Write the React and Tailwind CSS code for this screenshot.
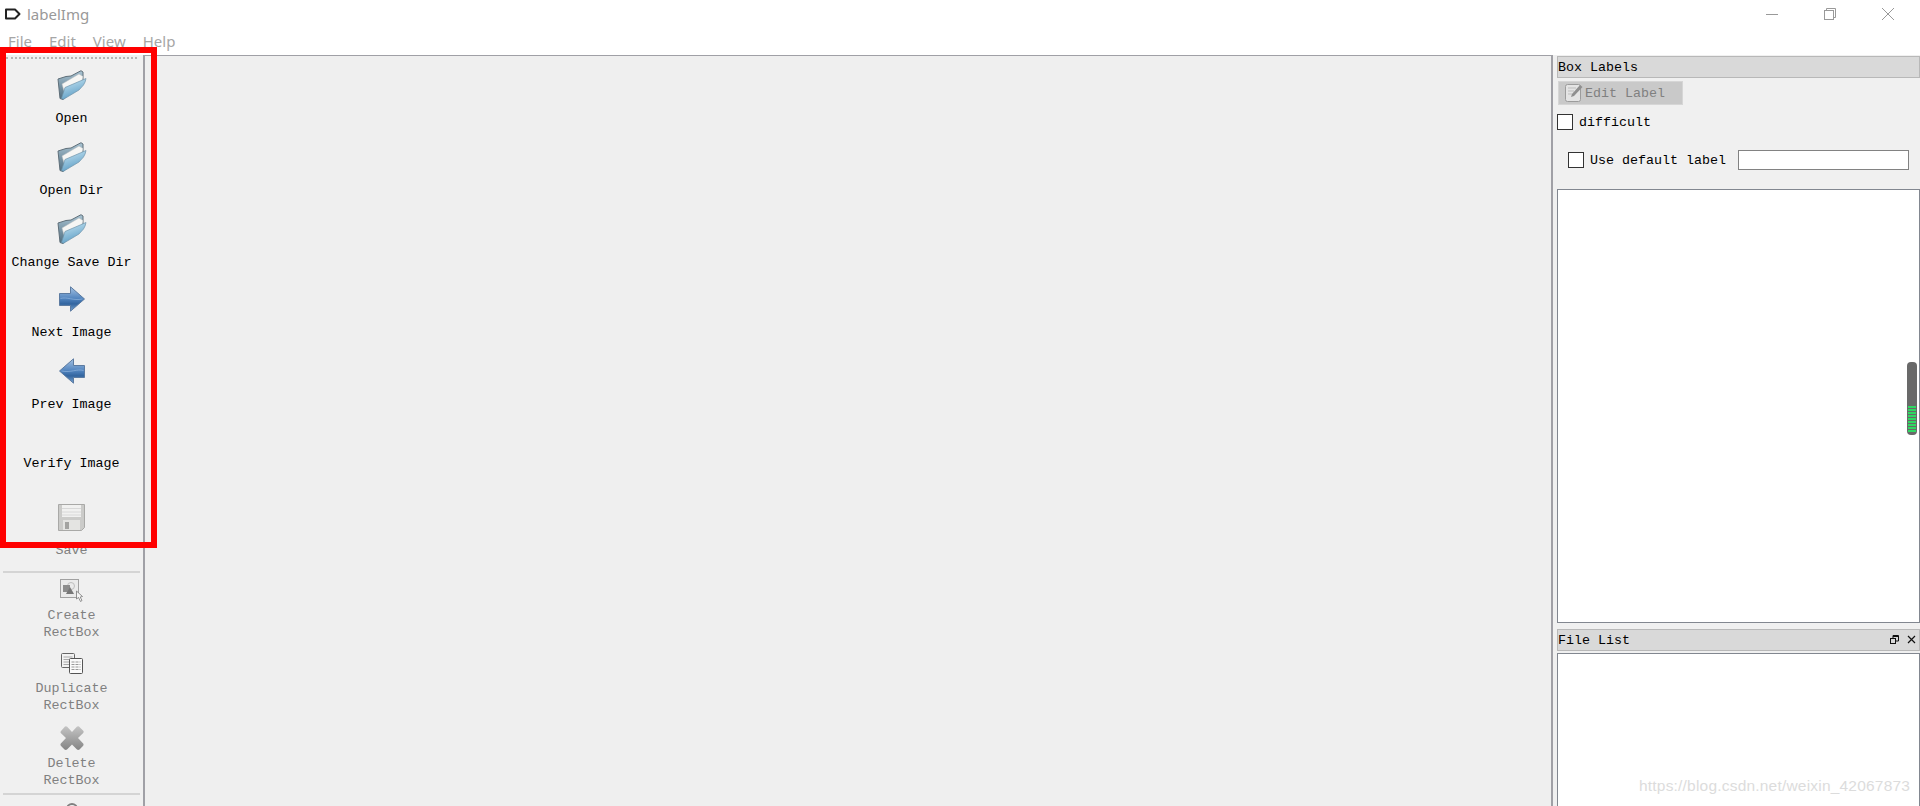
import React from 'react';

const Folder = ({ id }) => (
  <svg width="30" height="30" viewBox="0 0 30 30">
    <defs>
      <linearGradient id={`back${id}`} x1="0" y1="0" x2="0" y2="1">
        <stop offset="0" stopColor="#a9c4d3" />
        <stop offset="1" stopColor="#4f6c7e" />
      </linearGradient>
      <linearGradient id={`front${id}`} x1="0" y1="0" x2="0.4" y2="1">
        <stop offset="0" stopColor="#cfeaf6" />
        <stop offset="1" stopColor="#5f9fc6" />
      </linearGradient>
    </defs>
    <path d="M1 9 L9 6.5 L14 6 L24 .7 L26 2 L26 11 L6 29.5 L3 28.5 Z" fill={`url(#back${id})`} stroke="#5f6f79" strokeWidth="1" />
    <path d="M5 14 L22 4 L26 6.5 L25 11 L7 21 Z" fill="#f6f6f4" stroke="#b8bcbe" strokeWidth=".5" />
    <path d="M4.5 28.5 L8 17.5 L29 8.5 Q28.5 12 26.5 15 L22 20 L6.5 29.3 Z" fill={`url(#front${id})`} stroke="#6f94ab" strokeWidth=".7" />
  </svg>
);

const Arrow = ({ id, flip }) => (
  <svg width="26" height="26" viewBox="0 0 26 26" className={flip ? '-scale-x-100' : ''}>
    <defs>
      <linearGradient id={`arrow${id}`} x1="0" y1="0" x2="0" y2="1">
        <stop offset="0" stopColor="#a5c2e2" />
        <stop offset=".5" stopColor="#4f82bd" />
        <stop offset=".7" stopColor="#33659f" />
        <stop offset="1" stopColor="#7ba6d2" />
      </linearGradient>
    </defs>
    <path d="M.5 7.5 H11.5 V.8 L25.5 13 L11.5 25.2 V19.5 H.5 Z" fill={`url(#arrow${id})`} stroke="#5c7ba1" strokeWidth="1" />
    <path d="M1.5 12.5 C8 10.5 14 15 23.5 13" fill="none" stroke="#8fb2da" strokeWidth="1" opacity=".7" />
  </svg>
);

const Floppy = () => (
  <svg width="27" height="27" viewBox="0 0 27 27">
    <path d="M.5 .5 H26.5 V23.5 L23.5 26.5 H.5 Z" fill="#cbcbc9" stroke="#a9a9a7" />
    <rect x="4" y="1" width="19" height="12" fill="#f1f1f0" />
    <path d="M4 4.5 H23 M4 8 H23 M4 11 H23" stroke="#d8d8d8" />
    <rect x="5" y="16" width="17" height="10" fill="#e4e4e2" />
    <rect x="7" y="18" width="4" height="7" fill="#a3a3a1" />
  </svg>
);

const CreateIcon = () => (
  <svg width="24" height="24" viewBox="0 0 24 24">
    <rect x=".5" y=".5" width="18" height="18" fill="#eaeaea" stroke="#555" strokeDasharray="1 1" />
    <circle cx="11" cy="7" r="3.5" fill="none" stroke="#bdbdbd" />
    <rect x="3" y="6" width="7" height="7" fill="#8c8c8c" />
    <path d="M6 15 L10 8 L14 15 Z" fill="#777" />
    <path d="M16.5 12 V20 L18.5 18.5 L20.5 22.5 L22 21.5 L20.2 18 L22.5 17.5 Z" fill="#f4f4f4" stroke="#777" strokeWidth=".8" />
  </svg>
);

const DuplicateIcon = () => (
  <svg width="22" height="21" viewBox="0 0 22 21">
    <rect x=".5" y=".5" width="13" height="14" rx="1" fill="#f2f2f2" stroke="#666" />
    <path d="M2.5 4 H11.5 M2.5 6.5 H11.5 M2.5 9 H8 M2.5 11.5 H8" stroke="#a8a8a8" />
    <rect x="8.5" y="5.5" width="13" height="15" rx="1" fill="#fbfbfb" stroke="#555" />
    <path d="M10.5 9 H19.5 M10.5 11.5 H19.5 M10.5 14 H19.5 M10.5 16.5 H19.5" stroke="#999" strokeDasharray="3 1" />
  </svg>
);

const DeleteIcon = () => (
  <svg width="26" height="26" viewBox="0 0 26 26">
    <defs>
      <linearGradient id="del" x1="0" y1="0" x2="0" y2="1">
        <stop offset="0" stopColor="#c4c4c4" />
        <stop offset="1" stopColor="#858585" />
      </linearGradient>
    </defs>
    <path d="M2 6 L6 1.5 Q7.2 .8 8.2 1.8 L13 7 L17.8 1.8 Q18.8 .8 20 1.5 L24.5 6 Q25 7 24.2 8 L19 13 L24.2 18.5 Q25 19.5 24.2 20.8 L20.5 24.5 Q19 25.3 18 24.4 L13 19.5 L8 24.4 Q7 25.3 5.5 24.5 L1.8 20.8 Q1 19.5 1.8 18.5 L7 13 L1.8 8 Q1 7 2 6 Z" fill="url(#del)" />
  </svg>
);

const EditIcon = () => (
  <svg width="18" height="19" viewBox="0 0 18 19">
    <rect x=".5" y="1.5" width="15" height="17" rx="2" fill="#e4e4e4" stroke="#9c9c9c" />
    <path d="M3 5 H11 M3 8 H9 M3 11 H7" stroke="#bdbdbd" />
    <path d="M6 14 L7 11 L15 2 L17.5 4 L9 13 Z" fill="#8f8f8f" />
  </svg>
);

const ToolButton = ({ icon, label, disabled, className = 'h-[72px]' }) => (
  <div className={`flex flex-col items-center shrink-0 ${className} ${disabled ? 'text-[#808080]' : 'text-black'}`}>
    {icon && <div className="h-8 mt-[3px] mb-[9px] flex items-center justify-center">{icon}</div>}
    <span className="leading-[17px] text-center whitespace-pre-line">{label}</span>
  </div>
);

const TitleBar = ({ title, children }) => (
  <div className="h-[22px] shrink-0 flex items-center justify-between bg-[#d9d9d9] border border-[#b8b8b8]">
    <span className="text-black pt-[2px]">{title}</span>
    {children}
  </div>
);

const Checkbox = () => <span className="w-4 h-4 bg-white border border-[#333] shrink-0" />;

export default function App() {
  return (
    <div className="relative h-[806px] overflow-hidden flex flex-col bg-[#f0f0f0] text-[13.33px] font-['Liberation_Mono',monospace]">
      {/* window title */}
      <div className="h-7 shrink-0 bg-white flex items-center font-['Noto_Sans',sans-serif]">
        <svg width="16" height="12" viewBox="0 0 16 12" className="ml-[5px] mr-[6px]">
          <path d="M1 1.5 H10 L14.5 6 L10 10.5 H1 Z" fill="none" stroke="#222" strokeWidth="2" strokeLinejoin="round" />
        </svg>
        <span className="text-[15px] text-[#999]">labelImg</span>
        <div className="ml-auto flex items-center text-[#999]">
          <div className="w-[58px] flex justify-center">
            <svg width="12" height="12" viewBox="0 0 12 12"><path d="M0 6.5 H12" stroke="#999" /></svg>
          </div>
          <div className="w-[58px] flex justify-center">
            <svg width="12" height="12" viewBox="0 0 12 12" fill="none" stroke="#999"><rect x=".5" y="2.5" width="9" height="9" /><path d="M2.5 2.5 V.5 H11.5 V9.5 H9.5" /></svg>
          </div>
          <div className="w-[58px] mr-[3px] flex justify-center">
            <svg width="12" height="12" viewBox="0 0 12 12"><path d="M0 0 L12 12 M12 0 L0 12" stroke="#999" /></svg>
          </div>
        </div>
      </div>

      {/* menu */}
      <div className="h-[27px] shrink-0 bg-white flex items-center pl-2 gap-[17px] text-[15px] text-[#a6a6a6] font-['Noto_Sans',sans-serif]">
        <span>File</span>
        <span>Edit</span>
        <span>View</span>
        <span>Help</span>
      </div>

      <div className="flex-1 flex min-h-0">
        {/* tool bar */}
        <div className="w-[143px] shrink-0 flex flex-col pt-[2px] overflow-hidden">
          <div className="mx-[6px] mb-[7px] shrink-0 border-t-2 border-dotted border-[#b5b5b5]" />
          <ToolButton icon={<Folder id="a" />} label="Open" />
          <ToolButton icon={<Folder id="b" />} label="Open Dir" />
          <ToolButton icon={<Folder id="c" />} label="Change Save Dir" className="h-[70px]" />
          <ToolButton icon={<Arrow id="a" />} label="Next Image" />
          <ToolButton icon={<Arrow id="b" flip />} label="Prev Image" />
          <ToolButton label="Verify Image" className="h-[74px] pt-[31px]" />
          <ToolButton icon={<Floppy />} label="Save" disabled className="h-[73px]" />
          <div className="mx-[3px] shrink-0 h-[2px] bg-[#d4d4d4]" />
          <ToolButton icon={<CreateIcon />} label={'Create\nRectBox'} disabled className="h-[72px] -mt-[1px] [&>div]:mb-0" />
          <ToolButton icon={<DuplicateIcon />} label={'Duplicate\nRectBox'} disabled className="h-[75px] [&>div]:mb-[1px]" />
          <ToolButton icon={<DeleteIcon />} label={'Delete\nRectBox'} disabled className="h-[74px] [&>div]:mb-[1px]" />
          <div className="mx-[3px] shrink-0 h-[2px] bg-[#d4d4d4]" />
          <div className="mt-[8px] flex justify-center shrink-0">
            <span className="w-3 h-3 rounded-full border-2 border-[#808080]" />
          </div>
        </div>

        {/* canvas */}
        <div className="flex-1 bg-[#efefef] border-l-2 border-r-2 border-t border-[#a0a0a6]" />

        {/* right docks */}
        <div className="w-[367px] shrink-0 flex flex-col pl-[4px] pt-[1px]">
          <TitleBar title="Box Labels" />
          <div className="mt-[3px] ml-[1px] w-[125px] h-6 flex items-center gap-[2px] pl-[6px] bg-[#c9c9c9] border border-[#d6d6d6] text-[#808080]">
            <EditIcon />
            <span className="pt-[2px]">Edit Label</span>
          </div>
          <label className="mt-[9px] h-4 flex items-center gap-[6px] text-black">
            <Checkbox />
            <span className="pt-[1px]">difficult</span>
          </label>
          <div className="mt-[20px] h-[20px] flex items-center pl-[11px] text-black">
            <Checkbox />
            <span className="ml-[6px] mr-[12px] pt-[2px]">Use default label</span>
            <div className="w-[171px] h-[20px] bg-white border border-[#828282]" />
          </div>
          <div className="mt-[19px] h-[434px] shrink-0 bg-white border border-[#828790]" />
          <div className="mt-[6px]">
            <TitleBar title="File List">
              <div className="flex items-center gap-[8px] pr-[3px]">
                <svg width="9" height="9" viewBox="0 0 9 9" fill="none" stroke="#111" strokeWidth="1">
                  <rect x=".5" y="3.5" width="5" height="5" />
                  <path d="M3 3 V.5 H8.5 V6 H6" />
                  <path d="M3 1.5 H8.5" />
                </svg>
                <svg width="9" height="9" viewBox="0 0 9 9"><path d="M1 1 L8 8 M8 1 L1 8" stroke="#111" strokeWidth="1.2" /></svg>
              </div>
            </TitleBar>
          </div>
          <div className="mt-[2px] h-[170px] shrink-0 bg-white border border-[#828790]" />
        </div>
      </div>

      {/* red annotation frame */}
      <div className="absolute left-0 top-[47px] w-[157px] h-[501px] border-[6px] border-[#ff0000]" />

      {/* floating level meter */}
      <div className="absolute left-[1907px] top-[362px] w-[10px] h-[73px] rounded-[4px] bg-[#696969] flex flex-col justify-end items-center gap-[1px] pb-[3px]">
        {[...Array(9)].map((_, i) => (
          <span key={i} className="w-[8px] h-[2px] bg-[#2fd862]" />
        ))}
      </div>

      {/* watermark */}
      <div className="absolute left-[1639px] top-[774px] text-[15.5px] tracking-[0.2px] text-[#dcdcdc] font-['Liberation_Sans',sans-serif]">
        https://blog.csdn.net/weixin_42067873
      </div>
    </div>
  );
}
